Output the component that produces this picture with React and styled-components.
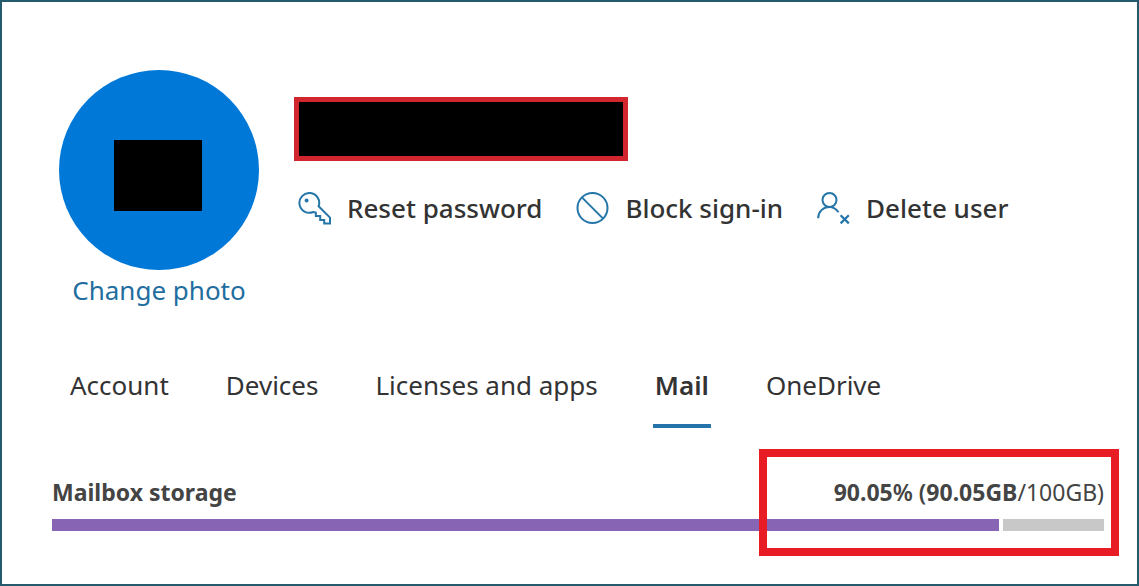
import styled, { createGlobalStyle } from "styled-components";

const actions = [
  { label: "Reset password", Icon: KeyIcon },
  { label: "Block sign-in", Icon: BlockIcon },
  { label: "Delete user", Icon: DeleteUserIcon },
];

const tabs = ["Account", "Devices", "Licenses and apps", "Mail", "OneDrive"];

const used = 90.05;

const App = () => {
  return (
    <>
      <GlobalStyle />
      <Panel>
        <Header>
          <PhotoColumn>
            <Avatar>
              <Initials />
            </Avatar>
            <PhotoLink href="#photo">Change photo</PhotoLink>
          </PhotoColumn>
          <UserInfo>
            <UserName />
            <Actions>
              {actions.map(({ label, Icon }) => (
                <ActionButton key={label} type="button">
                  <Icon />
                  {label}
                </ActionButton>
              ))}
            </Actions>
          </UserInfo>
        </Header>
        <Tabs role="tablist">
          {tabs.map((tab) => (
            <Tab
              key={tab}
              type="button"
              role="tab"
              aria-selected={tab === "Mail"}
              $active={tab === "Mail"}
            >
              {tab}
            </Tab>
          ))}
        </Tabs>
        <Storage>
          <StorageHead>
            <StorageTitle id="storage">Mailbox storage</StorageTitle>
            <Usage>
              <b>90.05</b>
              <Medium>% (</Medium>
              <b>90.05GB</b>/100GB)
            </Usage>
          </StorageHead>
          <Bar
            role="progressbar"
            aria-labelledby="storage"
            aria-valuenow={used}
            aria-valuemin={0}
            aria-valuemax={100}
          >
            <Used style={{ width: `${used}%` }} />
            <Free />
          </Bar>
          <Highlight />
        </Storage>
      </Panel>
    </>
  );
};

export default App;

function KeyIcon() {
  return (
    <Svg viewBox="0 0 33 33" aria-hidden="true">
      <path d="M20.6 14.3 32 25.6v6h-5.800V28h-4v-4h-4.400v-3.400l-2.600-.6A9.900 9.900 0 1 1 20.600 14.300Z" />
      <circle cx="8.600" cy="8.400" r="1" fill="currentColor" />
    </Svg>
  );
}

function BlockIcon() {
  return (
    <Svg viewBox="0 0 33 33" aria-hidden="true">
      <circle cx="16.500" cy="16" r="15" />
      <path d="M5.900 5.400 27.100 26.600" />
    </Svg>
  );
}

function DeleteUserIcon() {
  return (
    <Svg viewBox="0 0 33 33" aria-hidden="true">
      <circle cx="12.500" cy="8" r="7" />
      <path d="M1.200 26.200C1.200 19.600 6.200 15 12.200 15c3.700 0 7.200 2 9.300 5.200" />
      <path d="m23.600 23.200 8.200 8.200m0-8.200-8.200 8.200" strokeWidth="2.200" />
    </Svg>
  );
}

const GlobalStyle = createGlobalStyle`
  * {
    box-sizing: border-box;
  }
  body {
    margin: 0;
    background: #fff;
    color: #333;
    font-family: "Noto Sans", "Open Sans", sans-serif;
  }
  button {
    padding: 0;
    border: 0;
    background: none;
    color: inherit;
    font: inherit;
    cursor: pointer;
  }
`;

const Panel = styled.main`
  min-height: 100vh;
  padding: 68px 33px 28px 50px;
  border: 2px solid #245a6b;
`;

const Header = styled.header`
  display: flex;
  gap: 35px;
  padding-left: 7px;
`;

const PhotoColumn = styled.div`
  display: flex;
  flex-direction: column;
  align-items: center;
  flex-shrink: 0;
`;

const Avatar = styled.div`
  display: flex;
  align-items: center;
  justify-content: center;
  width: 200px;
  height: 200px;
  padding: 11px 2px 0 0;
  border-radius: 50%;
  background: #0078d7;
`;

const Initials = styled.div`
  width: 88px;
  height: 71px;
  background: #000;
`;

const PhotoLink = styled.a`
  color: #1f6e9f;
  font-size: 26px;
  line-height: 40px;
  text-decoration: none;
  white-space: nowrap;
`;

const UserInfo = styled.div`
  flex: 1;
  padding-top: 27px;
`;

const UserName = styled.div`
  max-width: 334px;
  height: 64px;
  border: 5px solid #d2262f;
  background: #000;
`;

const Actions = styled.div`
  display: flex;
  flex-wrap: wrap;
  gap: 8px 34px;
  margin-top: 29px;
  padding-left: 4px;
`;

const ActionButton = styled.button`
  && {
    display: flex;
    align-items: center;
    gap: 16px;
    font-size: 26px;
    font-weight: 500;
    line-height: 36px;
    white-space: nowrap;
  }
`;

const Svg = styled.svg`
  flex-shrink: 0;
  width: 33px;
  height: 33px;
  fill: none;
  stroke: currentColor;
  stroke-width: 2;
  color: #2576a8;
`;

const Tabs = styled.nav`
  display: flex;
  flex-wrap: wrap;
  gap: 0 53px;
  margin-top: 57px;
  padding-left: 16px;
`;

const Tab = styled.button`
  && {
    padding: 0 2px 21px;
    border-bottom: 4px solid ${(props) => (props.$active ? "#2473ab" : "transparent")};
    font-size: 26px;
    font-weight: ${(props) => (props.$active ? 600 : 400)};
    line-height: 36px;
    white-space: nowrap;
  }
`;

const Storage = styled.section`
  position: relative;
  margin-top: 48px;
`;

const StorageHead = styled.div`
  display: flex;
  justify-content: space-between;
  color: #444;
  font-size: 23px;
  line-height: 32px;
`;

const StorageTitle = styled.h2`
  margin: 0;
  font-size: 23px;
  font-weight: 700;
  line-height: 32px;
`;

const Usage = styled.span`
  white-space: nowrap;
`;

const Medium = styled.span`
  font-weight: 600;
`;

const Bar = styled.div`
  display: flex;
  gap: 4px;
  height: 12px;
  margin-top: 11px;
`;

const Used = styled.div`
  background: #8764b4;
`;

const Free = styled.div`
  flex: 1;
  background: #c8c8c8;
`;

/* red frame drawn over the usage numbers and the end of the bar */
const Highlight = styled.div`
  position: absolute;
  top: -27px;
  right: -15px;
  bottom: -25px;
  width: 360px;
  border: 8px solid #e81c24;
  pointer-events: none;
`;
